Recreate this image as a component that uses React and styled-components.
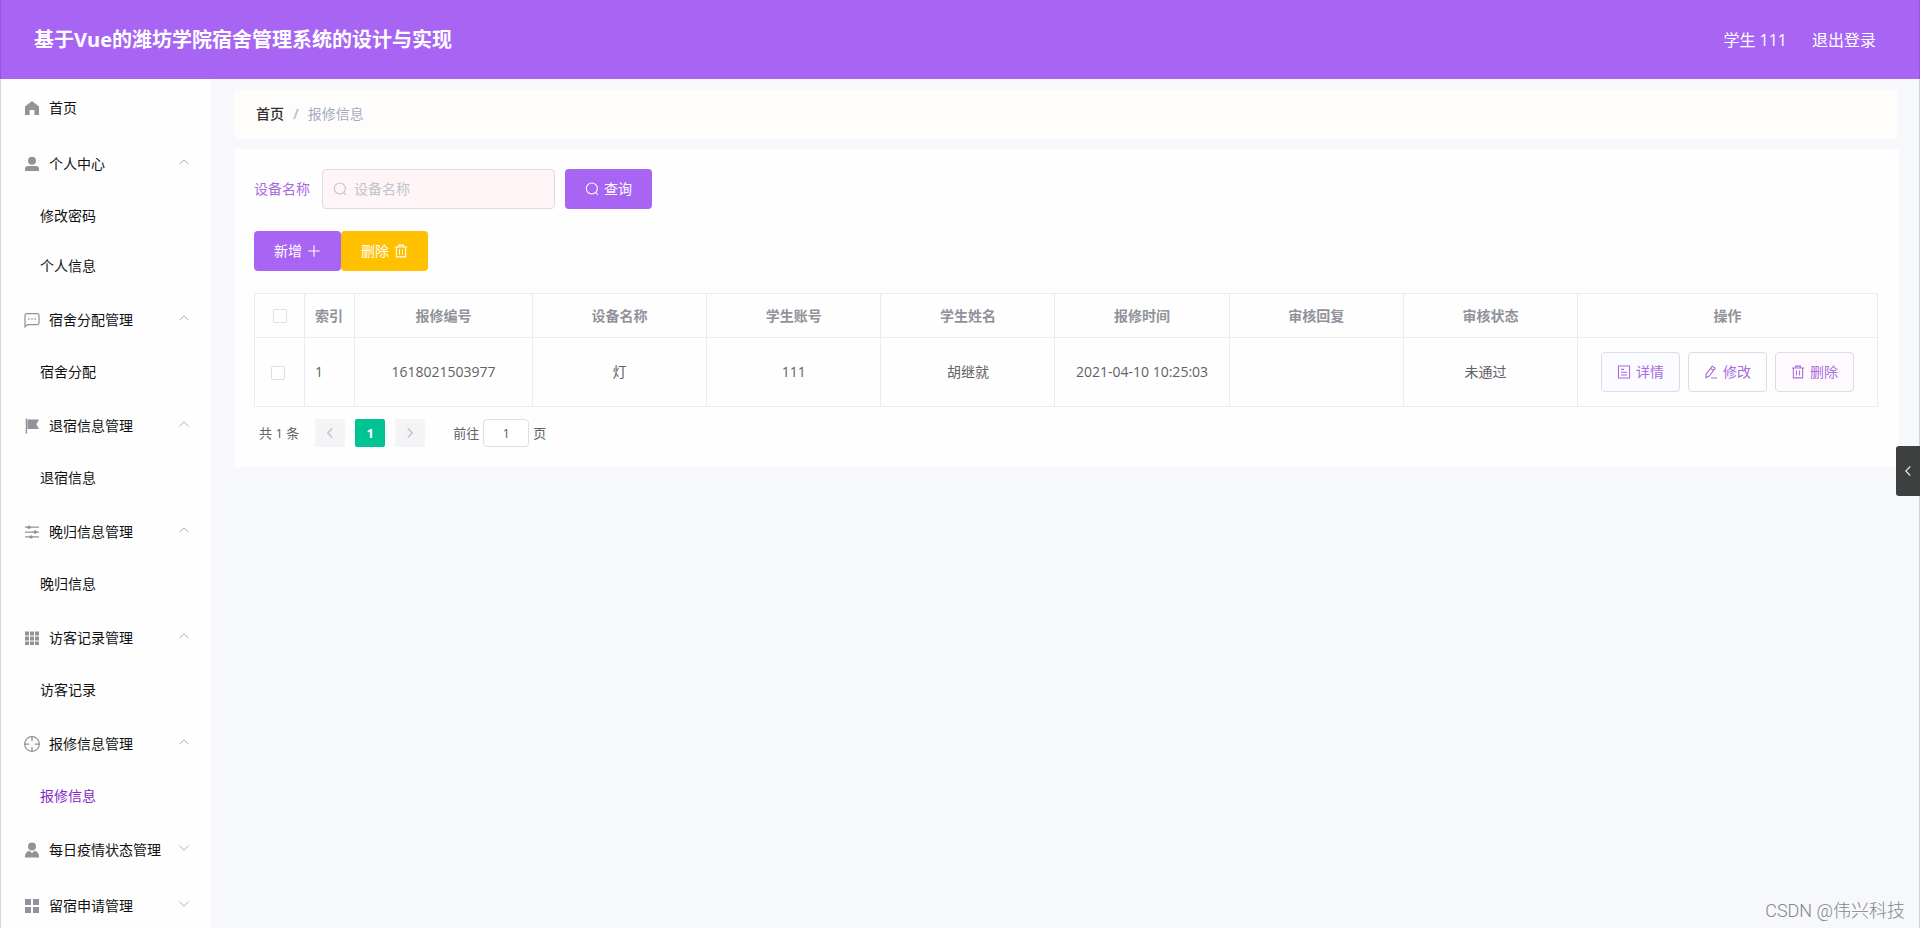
import styled, { createGlobalStyle } from "styled-components";

const menu = [
  { title: "首页", icon: "home" },
  { title: "个人中心", icon: "user", open: true, items: ["修改密码", "个人信息"] },
  { title: "宿舍分配管理", icon: "chat", open: true, items: ["宿舍分配"] },
  { title: "退宿信息管理", icon: "flag", open: true, items: ["退宿信息"] },
  { title: "晚归信息管理", icon: "sliders", open: true, items: ["晚归信息"] },
  { title: "访客记录管理", icon: "grid", open: true, items: ["访客记录"] },
  { title: "报修信息管理", icon: "aim", open: true, items: ["报修信息"] },
  { title: "每日疫情状态管理", icon: "person", items: [] },
  { title: "留宿申请管理", icon: "squares", items: [] },
];

const columns = ["报修编号", "设备名称", "学生账号", "学生姓名", "报修时间", "审核回复", "审核状态"];

const rows = [
  ["1618021503977", "灯", "111", "胡继就", "2021-04-10 10:25:03", "", "未通过"],
];

const shapes = {
  home: <path fill="currentColor" stroke="none" d="M8 1 1 6.6V15h4.6v-5h4.8v5H15V6.6z" />,
  user: (
    <g fill="currentColor" stroke="none">
      <circle cx="8" cy="4.8" r="4" />
      <path d="M1 15v-2.2Q1 10 4 10h8q3 0 3 2.8V15z" />
    </g>
  ),
  person: (
    <g fill="currentColor" stroke="none">
      <circle cx="8" cy="4.6" r="4" />
      <path d="M.8 15.4c0-3.200 1.400-5.400 4.200-6.600L8 11l3-2.200c2.800 1.200 4.200 3.400 4.200 6.600z" />
    </g>
  ),
  chat: (
    <>
      <path d="M1 14.800V3.200Q1 1.500 2.700 1.500h10.600Q15 1.500 15 3.200v7.600q0 1.700-1.700 1.700H3.600z" />
      <path strokeWidth="1.600" d="M4.200 7h1.400M7.300 7h1.400M10.400 7h1.400" />
    </>
  ),
  flag: (
    <>
      <path strokeWidth="1.400" d="M2.400.600v15" />
      <path fill="currentColor" stroke="none" d="M3.400 1.400H15l-2.600 4.800L15 11H3.400z" />
    </>
  ),
  sliders: (
    <>
      <path d="M1 3.200h14M1 8h14M1 12.900h14" />
      <g fill="currentColor" stroke="none">
        <circle cx="5" cy="3.200" r="1.700" />
        <circle cx="11.200" cy="8" r="1.700" />
        <circle cx="7" cy="12.900" r="1.700" />
      </g>
    </>
  ),
  grid: (
    <path
      fill="currentColor"
      stroke="none"
      d="M1 1.500h4v4H1zM6 1.500h4v4H6zM11 1.500h4v4h-4zM1 6.500h4v4H1zM6 6.500h4v4H6zM11 6.500h4v4h-4zM1 11.500h4v3.500H1zM6 11.500h4v3.500H6zM11 11.500h4v3.500h-4z"
    />
  ),
  squares: <path fill="currentColor" stroke="none" d="M1 1h6v6H1zM9 1h6v6H9zM1 9h6v6H1zM9 9h6v6H9z" />,
  aim: (
    <>
      <circle cx="8" cy="8" r="7.300" />
      <path d="M8 .700v4.600M8 10.700v4.600M.700 8h4.600M10.700 8h4.600" />
    </>
  ),
  search: (
    <>
      <circle cx="7.800" cy="7.500" r="6.300" />
      <path d="m12.300 12 2.400 2.600" />
    </>
  ),
  plus: <path d="M8 1.500v13M1.500 8h13" />,
  trash: (
    <>
      <path d="M.800 3.500h14.400M5.300 3.500V1.300h5.400v2.200M2.700 3.500v11.200h10.600V3.500" />
      <path d="M6.300 6.300v5.600M9.700 6.300v5.600" />
    </>
  ),
  doc: (
    <>
      <path d="M1.700 1.200h12.600v13.600H1.700z" />
      <path d="M4.500 5h3.500M4.500 8.200h7M4.500 11.400h7" />
    </>
  ),
  edit: <path d="m9.300 1.400 3.500 2.200-6.600 9-4 1.800.400-4.200zM7.600 4l3.400 2.300M8 14.800h7" />,
  up: <path d="m2 11 6-6 6 6" />,
  down: <path d="m2 5 6 6 6-6" />,
  left: <path d="M11 2 5 8l6 6" />,
  right: <path d="m5 2 6 6-6 6" />,
};

const Icon = ({ name, size = 14, weight = 1.25 }) => (
  <Glyph
    viewBox="0 0 16 16"
    width={size}
    height={size}
    fill="none"
    stroke="currentColor"
    strokeWidth={weight}
    aria-hidden="true"
  >
    {shapes[name]}
  </Glyph>
);

const Sidebar = () => (
  <Side>
    {menu.map((group) => (
      <div key={group.title}>
        <MenuTitle type="button">
          <MenuIcon>
            <Icon name={group.icon} size={16} />
          </MenuIcon>
          <span>{group.title}</span>
          {group.items && (
            <Arrow>
              <Icon name={group.open ? "up" : "down"} size={12} />
            </Arrow>
          )}
        </MenuTitle>
        {group.open &&
          group.items.map((item) => (
            <MenuItem key={item} href="#" $active={item === "报修信息"}>
              {item}
            </MenuItem>
          ))}
      </div>
    ))}
  </Side>
);

const RepairTable = () => (
  <Table>
    <colgroup>
      <Col $width={50} />
      <Col $width={50} />
      <Col $width={178} />
      {columns.slice(1).map((name) => (
        <col key={name} />
      ))}
      <Col $width={300} />
    </colgroup>
    <thead>
      <tr>
        <Th>
          <Check type="checkbox" aria-label="全选" />
        </Th>
        <Th $align="left">索引</Th>
        {columns.map((name) => (
          <Th key={name}>{name}</Th>
        ))}
        <Th>操作</Th>
      </tr>
    </thead>
    <tbody>
      {rows.map((row, index) => (
        <tr key={row[0]}>
          <Td $align="left">
            <Check type="checkbox" aria-label="选择" />
          </Td>
          <Td $align="left">{index + 1}</Td>
          {row.slice(0, -1).map((value, i) => (
            <Td key={columns[i]}>{value}</Td>
          ))}
          <Td>
            <Status>{row[row.length - 1]}</Status>
          </Td>
          <Td>
            <Actions>
              <ActionButton type="button" $bg="#fbfcff">
                <Icon name="doc" />
                详情
              </ActionButton>
              <ActionButton type="button" $bg="#fefefe">
                <Icon name="edit" />
                修改
              </ActionButton>
              <ActionButton type="button" $bg="#fffafe">
                <Icon name="trash" />
                删除
              </ActionButton>
            </Actions>
          </Td>
        </tr>
      ))}
    </tbody>
  </Table>
);

const App = () => (
  <Page>
    <GlobalStyle />
    <Header>
      <h1>基于Vue的潍坊学院宿舍管理系统的设计与实现</h1>
      <UserBar>
        <span>学生 111</span>
        <a href="#">退出登录</a>
      </UserBar>
    </Header>
    <Body>
      <Sidebar />
      <Main>
        <Breadcrumb>
          <a href="#">首页</a>
          <b>/</b>
          <span>报修信息</span>
        </Breadcrumb>
        <Panel>
          <SearchForm>
            <label htmlFor="device">设备名称</label>
            <SearchBox>
              <Icon name="search" />
              <input id="device" type="text" placeholder="设备名称" />
            </SearchBox>
            <Button type="button" $bg="#a865f3">
              <Icon name="search" />
              查询
            </Button>
          </SearchForm>
          <Toolbar>
            <Button type="button" $bg="#a865f3">
              新增
              <Icon name="plus" />
            </Button>
            <Button type="button" $bg="#ffc000">
              删除
              <Icon name="trash" />
            </Button>
          </Toolbar>
          <RepairTable />
          <Pagination>
            <Total>共 1 条</Total>
            <Pager>
              <PageButton type="button" aria-label="上一页" disabled>
                <Icon name="left" size={12} weight={2} />
              </PageButton>
              <PageButton type="button" $active>
                1
              </PageButton>
              <PageButton type="button" aria-label="下一页" disabled>
                <Icon name="right" size={12} weight={2} />
              </PageButton>
            </Pager>
            <Jump>
              <span>前往</span>
              <input type="text" defaultValue="1" />
              <span>页</span>
            </Jump>
          </Pagination>
        </Panel>
      </Main>
    </Body>
    <Drawer type="button" aria-label="展开">
      <Icon name="left" size={12} weight={1.5} />
    </Drawer>
    <Watermark>CSDN @伟兴科技</Watermark>
  </Page>
);

const GlobalStyle = createGlobalStyle`
  * {
    box-sizing: border-box;
  }

  body {
    margin: 0;
    overflow: hidden;
    background: #f6f8fc;
  }

  body, button, input {
    font-family: "Open Sans", "Noto Sans CJK SC", sans-serif;
    font-size: 14px;
  }

  button {
    border: none;
    cursor: pointer;
  }

  a {
    color: inherit;
    text-decoration: none;
  }
`;

const Glyph = styled.svg`
  display: block;
  flex: none;
`;

const Page = styled.div`
  position: relative;
  display: flex;
  flex-direction: column;
  height: 100vh;
  overflow: hidden;

  &::after {
    content: "";
    position: absolute;
    inset: 0;
    border: solid rgba(60, 50, 80, 0.2);
    border-width: 0 1px;
    pointer-events: none;
  }
`;

const Header = styled.header`
  display: flex;
  flex: none;
  align-items: center;
  justify-content: space-between;
  height: 79px;
  padding: 0 44px 2px 34px;
  background: #a865f3;
  color: #fff;

  h1 {
    margin: 0;
    font-size: 20px;
    font-weight: 700;
  }
`;

const UserBar = styled.div`
  display: flex;
  gap: 25px;
  font-size: 16px;
`;

const Body = styled.div`
  display: flex;
  flex: 1;
  min-height: 0;
`;

const Side = styled.nav`
  flex: none;
  width: 210px;
  padding-top: 1px;
  overflow: hidden;
  background: #fefefe;
`;

const MenuTitle = styled.button`
  display: flex;
  align-items: center;
  width: 100%;
  height: 56px;
  padding: 0 20px 2px;
  background: none;
  color: #111;
`;

const MenuIcon = styled.span`
  display: flex;
  justify-content: center;
  width: 24px;
  margin-right: 5px;
  padding-top: 2px;
  color: #909399;
`;

const Arrow = styled.span`
  margin-left: auto;
  padding-bottom: 2px;
  color: #a5a7ac;
`;

const MenuItem = styled.a`
  display: block;
  height: 50px;
  padding-left: 40px;
  line-height: 48px;
  color: ${(props) => (props.$active ? "#8427c9" : "#111")};
`;

const Main = styled.main`
  flex: 1;
  min-width: 0;
  padding: 10px 22px 0 24px;
`;

const Breadcrumb = styled.nav`
  display: flex;
  align-items: center;
  gap: 9px;
  height: 50px;
  margin-bottom: 10px;
  padding: 0 22px 2px;
  border-radius: 4px;
  background: #fffdfc;
  color: #a2abbe;

  a {
    color: #303133;
    font-weight: 500;
  }

  b {
    color: #c0c4cc;
  }
`;

const Panel = styled.section`
  padding: 20px;
  background: #fefefe;
`;

const SearchForm = styled.form`
  display: flex;
  align-items: center;
  gap: 10px;

  label {
    margin-right: 2px;
    padding-bottom: 2px;
    color: #a96bdf;
  }
`;

const SearchBox = styled.div`
  display: flex;
  align-items: center;
  gap: 7px;
  width: 233px;
  height: 40px;
  padding: 0 10px;
  border: 1px solid #dcdce6;
  border-radius: 4px;
  background: #fff5f7;
  color: #c0c4cc;

  input {
    flex: 1;
    min-width: 0;
    padding: 0 0 2px;
    border: none;
    outline: none;
    background: none;
  }

  input::placeholder {
    color: #c0c4cc;
  }
`;

const Button = styled.button`
  display: flex;
  align-items: center;
  justify-content: center;
  gap: 5px;
  width: 87px;
  height: 40px;
  padding: 0 0 2px;
  border-radius: 4px;
  background: ${(props) => props.$bg};
  color: #fff;

  svg {
    margin-top: 2px;
  }
`;

const Toolbar = styled.div`
  display: flex;
  margin: 22px 0;
`;

const Table = styled.table`
  width: 100%;
  table-layout: fixed;
  border-collapse: collapse;
`;

const Col = styled.col`
  width: ${(props) => props.$width}px;
`;

const Th = styled.th`
  height: 44px;
  padding: 0 10px 2px;
  border: 1px solid #ebecf3;
  color: #909399;
  font-weight: 700;
  text-align: ${(props) => props.$align || "center"};
  white-space: nowrap;
`;

const Td = styled.td`
  height: 69px;
  padding: 0 10px 2px;
  border: 1px solid #ebecf3;
  color: #606266;
  text-align: ${(props) => props.$align || "center"};
  white-space: nowrap;
`;

const Status = styled.span`
  margin-right: 10px;
`;

const Check = styled.input`
  appearance: none;
  display: inline-block;
  width: 14px;
  height: 14px;
  margin: 0 6px;
  border: 1px solid #dcdfe6;
  border-radius: 2px;
  background: #fff;
  vertical-align: middle;
`;

const Actions = styled.div`
  display: flex;
  justify-content: center;
  gap: 8px;
  padding-top: 2px;
`;

const ActionButton = styled(Button)`
  width: 79px;
  border: 1px solid #dcdbe6;
  color: #a96bdf;
`;

const Pagination = styled.div`
  display: flex;
  align-items: center;
  height: 28px;
  margin-top: 12px;
  padding-left: 5px;
  color: #606266;
  font-size: 13px;
`;

const Total = styled.span`
  padding-bottom: 2px;
`;

const Pager = styled.div`
  display: flex;
  gap: 10px;
  margin: 0 28px 0 16px;
`;

const PageButton = styled.button`
  display: flex;
  align-items: center;
  justify-content: center;
  width: 30px;
  height: 28px;
  padding: 0;
  border-radius: 2px;
  background: ${(props) => (props.$active ? "#00c292" : "#f4f4f7")};
  color: ${(props) => (props.$active ? "#fff" : "#c0c4cc")};
  font-size: 13px;
  font-weight: 700;
`;

const Jump = styled.label`
  display: flex;
  align-items: center;
  gap: 4px;

  span {
    padding-bottom: 2px;
  }

  input {
    width: 46px;
    height: 28px;
    padding: 0 3px;
    border: 1px solid #dcdfe6;
    border-radius: 4px;
    background: #fff;
    color: #606266;
    font-size: 13px;
    text-align: center;
  }
`;

const Drawer = styled.button`
  position: absolute;
  z-index: 1;
  top: 446px;
  right: 0;
  display: flex;
  align-items: center;
  justify-content: center;
  width: 24px;
  height: 50px;
  padding: 0;
  border-radius: 3px 0 0 3px;
  background: #3e403f;
  color: #e6e6e6;
`;

const Watermark = styled.div`
  position: absolute;
  right: 15px;
  bottom: 6px;
  color: #85868a;
  font-family: Roboto, "Noto Sans CJK SC", sans-serif;
  font-size: 18px;
  font-weight: 300;
`;

export default App;
